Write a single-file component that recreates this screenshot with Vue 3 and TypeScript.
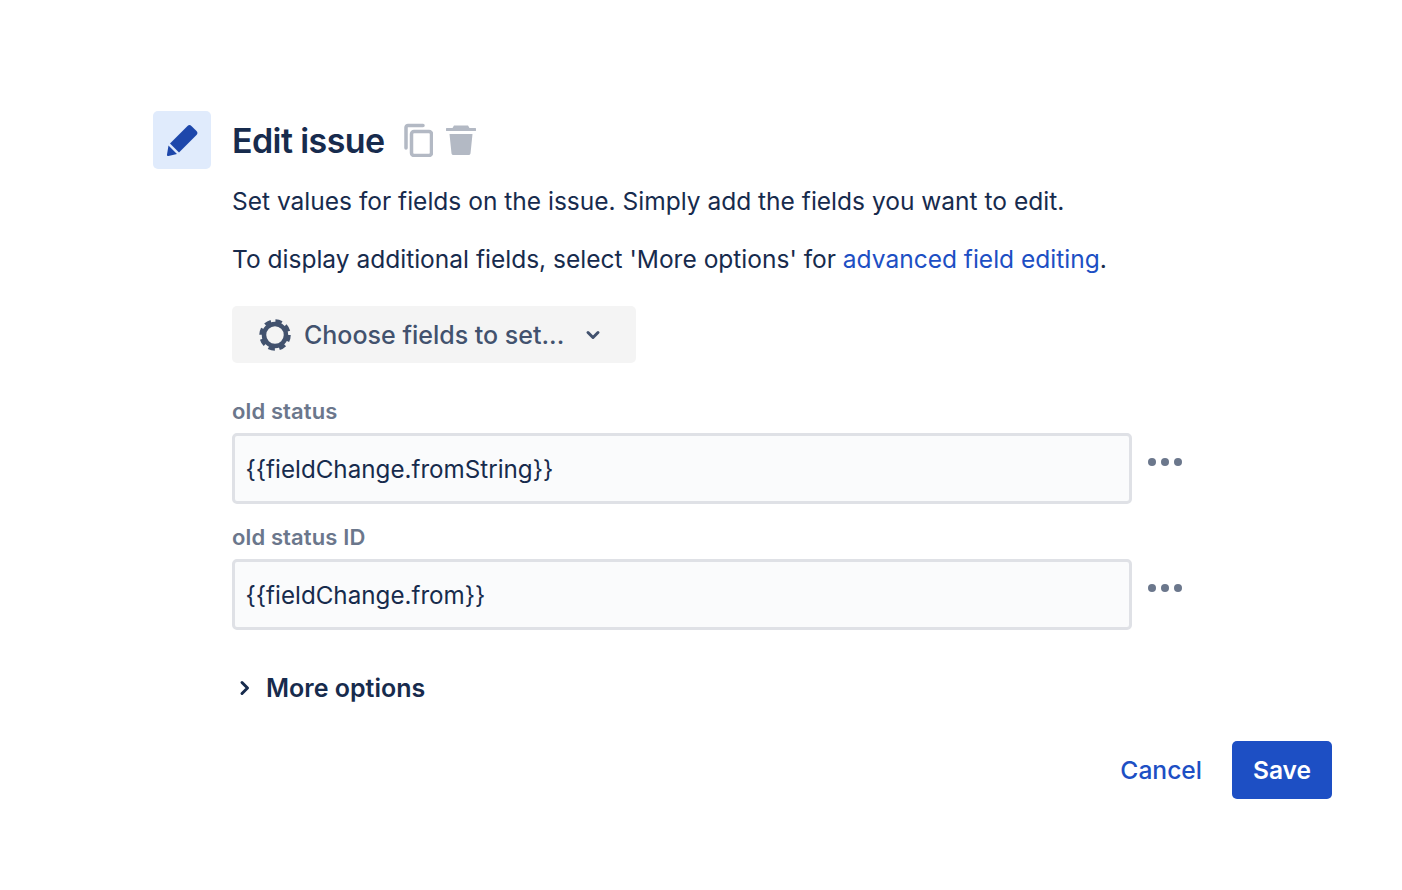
<script setup lang="ts">
const fields = [
  { label: 'old status', value: '{{fieldChange.fromString}}' },
  { label: 'old status ID', value: '{{fieldChange.from}}' },
]
</script>

<template>
  <main class="page">
    <header class="head">
      <div class="badge">
        <svg width="58" height="58" viewBox="0 0 58 58">
          <path fill="#1d47ab" d="M34.500 15a2.800 2.800 0 0 1 3.900 0l5.100 5a2.800 2.800 0 0 1 0 3.900L26 41.500l-9-9z"/>
          <path fill="#1d47ab" d="M15.500 34.500 24 43l-8.500 2a1.200 1.200 0 0 1-1.500-1.500z"/>
        </svg>
      </div>
      <h1>Edit issue</h1>
      <svg class="act" width="29" height="34" viewBox="0 0 29 34"><path fill="none" stroke="#b3b9c4" stroke-width="3.500" stroke-linecap="round" d="M19 2.500H4a2 2 0 0 0-2 2V25"/><rect x="7.500" y="8.500" width="20" height="24" rx="2.500" fill="none" stroke="#b3b9c4" stroke-width="3.500"/></svg>
      <svg class="act" width="30" height="32" viewBox="0 0 30 32"><path fill="#b3b9c4" d="M8 1.500h14l1.500 2.500H29a1 1 0 0 1 0 3H1a1 1 0 0 1 0-3h5.500zM3.500 10h23l-2 19.500a2 2 0 0 1-2 1.500h-15a2 2 0 0 1-2-1.500z"/></svg>
    </header>
    <div class="body">
      <p class="first">Set values for fields on the issue. Simply add the fields you want to edit.</p>
      <p class="second">To display additional fields, select 'More options' for <a>advanced field editing</a>.</p>
      <button class="choose">
        <svg width="34" height="34" viewBox="0 0 34 34"><circle cx="17" cy="17" r="11" fill="none" stroke="#42526e" stroke-width="4.500"/><circle cx="17" cy="17" r="14" fill="none" stroke="#42526e" stroke-width="3.500" stroke-dasharray="6.500 4.500"/></svg>
        <span>Choose fields to set...</span>
        <svg class="chev" width="16" height="16" viewBox="0 0 16 16"><path d="M3 5.500 8 10.500 13 5.500" fill="none" stroke="#42526e" stroke-width="3" stroke-linecap="round" stroke-linejoin="round"/></svg>
      </button>
      <div v-for="f in fields" :key="f.label" class="field">
        <label>{{ f.label }}</label>
        <div class="row">
          <div class="input">{{ f.value }}</div>
          <div class="dots"><i /><i /><i /></div>
        </div>
      </div>
      <div class="more">
        <svg width="12" height="16" viewBox="0 0 12 16"><path d="M3 2.500 8.500 8 3 13.500" fill="none" stroke="#172b4d" stroke-width="3" stroke-linecap="round" stroke-linejoin="round"/></svg>
        <span>More options</span>
      </div>
    </div>
    <footer class="foot">
      <a class="cancel">Cancel</a>
      <button class="save">Save</button>
    </footer>
  </main>
</template>

<style scoped>
.page { box-sizing: border-box; width: 1402px; height: 890px; padding: 111px 70px 0 153px; font-family: Inter, "Liberation Sans", sans-serif; color: #172b4d; background: #fff; }
.head { display: flex; align-items: center; height: 58px; }
.badge { width: 58px; height: 58px; border-radius: 5px; background: #e0ebfc; margin-right: 21px; }
.badge svg { display: block; }
h1 { margin: 2px 20px 0 0; font-size: 34px; font-weight: 600; letter-spacing: -0.6px; line-height: 56px; }
.act { margin-right: 13px; }
.body { margin-left: 79px; }
p { margin: 0; font-size: 24.52px; line-height: 32px; }
.first { margin-top: 16px; }
.second { margin-top: 26px; }
a { color: #1d4fc4; }
.choose { margin-top: 31px; width: 404px; height: 57px; display: flex; align-items: center; padding: 0 0 0 26px; border: 0; border-radius: 5px; background: #f4f4f4; color: #42526e; font: 500 25px Inter, "Liberation Sans", sans-serif; }
.choose span { margin-left: 12px; }
.chev { margin-left: 21px; }
.field { margin-top: 33px; }
.field + .field { margin-top: 18px; }
label { display: block; color: #6b778c; font-size: 22px; font-weight: 600; letter-spacing: 0.12px; line-height: 30px; margin-bottom: 7px; }
.row { display: flex; align-items: center; }
.input { box-sizing: border-box; width: 900px; height: 71px; border: 3px solid #dfe1e6; border-radius: 5px; background: #fafbfc; display: flex; align-items: center; padding: 2px 0 0 10.5px; font-size: 24.2px; }
.dots { display: flex; gap: 5px; margin-left: 16px; margin-top: -14px; }
.dots i { width: 8px; height: 8px; border-radius: 50%; background: #6b778c; }
.more { display: flex; align-items: center; gap: 15px; margin-top: 42px; margin-left: 7px; font-size: 25px; font-weight: 600; line-height: 32px; }
.foot { display: flex; justify-content: flex-end; align-items: center; gap: 30px; margin-top: 37px; }
.cancel { font-size: 24.6px; font-weight: 500; }
.save { width: 100px; height: 58px; border: 0; border-radius: 5px; background: #1d4fc4; color: #fff; font: 600 24.5px Inter, "Liberation Sans", sans-serif; }
</style>
